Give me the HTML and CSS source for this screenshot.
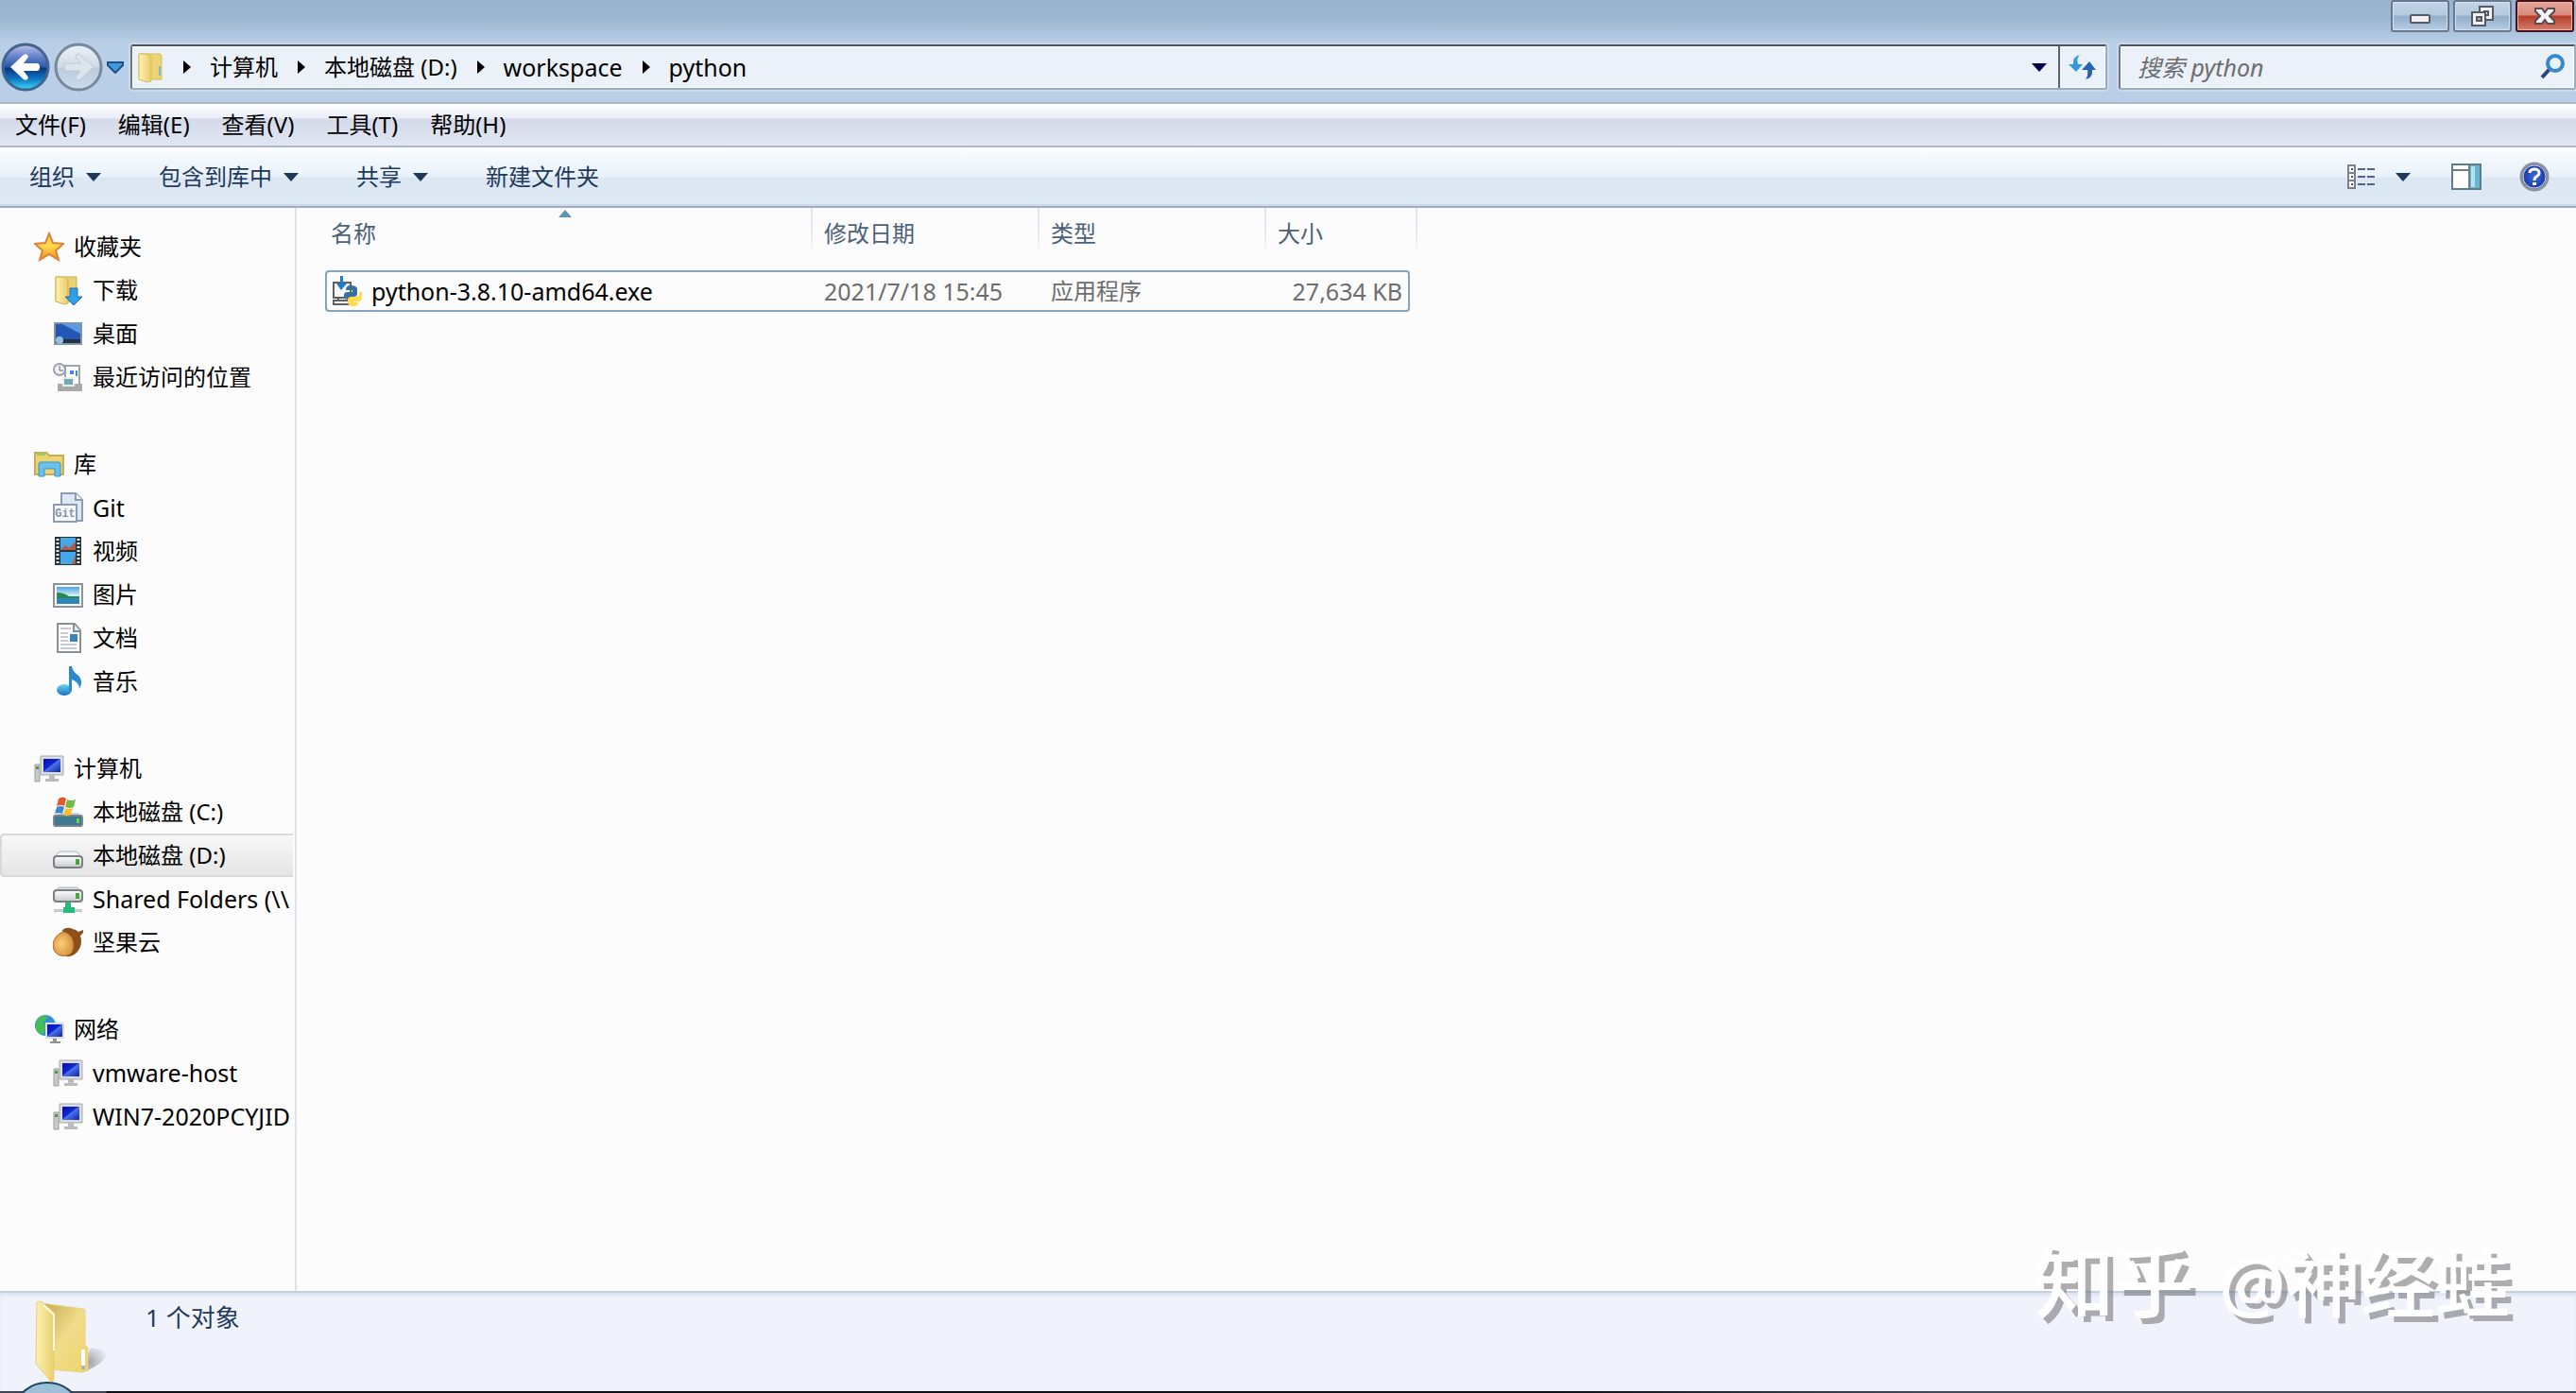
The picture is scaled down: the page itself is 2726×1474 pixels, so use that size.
FILE: index.html
```html
<!DOCTYPE html>
<html lang="zh-CN">
<head>
    <meta charset="UTF-8">
    <meta name="viewport" content="width=device-width, initial-scale=1.0">
    <title>python</title>
    <link rel="stylesheet" href="styles.css">
</head>
<body>
    <!-- shared icons -->
    <svg class="defs" width="0" height="0" aria-hidden="true">
        <defs>
            <linearGradient id="gBack" x1="0" y1="0" x2="0" y2="1">
                <stop offset="0" stop-color="#c3c3ea"/><stop offset=".25" stop-color="#6a86cc"/><stop offset=".5" stop-color="#2a58ab"/>
                <stop offset=".52" stop-color="#08357e"/><stop offset=".75" stop-color="#0d72c4"/><stop offset="1" stop-color="#3be0fa"/>
            </linearGradient>
            <linearGradient id="gFwd" x1="0" y1="0" x2="0" y2="1">
                <stop offset="0" stop-color="#edf2f8"/><stop offset=".5" stop-color="#cfdae6"/><stop offset=".52" stop-color="#bccbdc"/><stop offset="1" stop-color="#cbdcee"/>
            </linearGradient>
            <linearGradient id="gFolder" x1="0" y1="0" x2="1" y2="0">
                <stop offset="0" stop-color="#fdf3b4"/><stop offset="1" stop-color="#e9cd6c"/>
            </linearGradient>
            <linearGradient id="gFolderIn" x1="0" y1="0" x2="1" y2="1">
                <stop offset="0" stop-color="#c5a850"/><stop offset=".5" stop-color="#f0dc8b"/><stop offset="1" stop-color="#efd369"/>
            </linearGradient>
            <linearGradient id="gBlue" x1="0" y1="0" x2="0" y2="1">
                <stop offset="0" stop-color="#73d0f2"/><stop offset="1" stop-color="#1672bf"/>
            </linearGradient>
            <linearGradient id="gScreen" x1="0" y1="0" x2="1" y2="1">
                <stop offset="0" stop-color="#0510b0"/><stop offset=".45" stop-color="#1126cf"/><stop offset=".5" stop-color="#4a74ea"/><stop offset="1" stop-color="#1223a4"/>
            </linearGradient>
            <linearGradient id="gStar" x1="0" y1="0" x2="0" y2="1">
                <stop offset="0" stop-color="#ffcf55"/><stop offset=".5" stop-color="#ffd94d"/><stop offset="1" stop-color="#f28a22"/>
            </linearGradient>
            <linearGradient id="gDrive" x1="0" y1="0" x2="0" y2="1">
                <stop offset="0" stop-color="#fff"/><stop offset="1" stop-color="#c6c9cd"/>
            </linearGradient>
            <linearGradient id="gPhoto" x1="0" y1="0" x2="0" y2="1">
                <stop offset="0" stop-color="#4aa2ec"/><stop offset=".5" stop-color="#d3f0f0"/><stop offset="1" stop-color="#52b8d8"/>
            </linearGradient>
            <radialGradient id="gHelp"><stop offset="0" stop-color="#3d6ce6"/><stop offset="1" stop-color="#12309c"/></radialGradient>
            <radialGradient id="gNut" cx=".4" cy=".5"><stop offset="0" stop-color="#ffce79"/><stop offset="1" stop-color="#d99a44"/></radialGradient>
            <radialGradient id="gShadow" cx=".2" cy=".6" r=".8"><stop offset="0" stop-color="#9a9ca6"/><stop offset="1" stop-color="#f0f3fb"/></radialGradient>

            <symbol id="pc" viewBox="0 0 32 32">
                <path d="M1 12h5v18H1z" fill="#c6cac9" stroke="#9a9e9e"/><path d="M2 14h3v3H2z" fill="#4f9c46"/>
                <path d="M7 3h24v20H7z" fill="#dcdcde" stroke="#a5a7aa"/><path d="M10 6h18v14H10z" fill="url(#gScreen)"/>
                <path d="M16 23h6v4h4v3H12v-3h4z" fill="#b9bbbd"/>
            </symbol>
            <symbol id="drive" viewBox="0 0 32 32">
                <path d="M5 14q1-2 3-2h16q2 0 3 2l3 5H2z" fill="#f6f6f7" stroke="#b0b2b5"/>
                <rect x="1" y="17" width="30" height="12" rx="3" fill="url(#gDrive)" stroke="#7b7e82" stroke-width="2"/>
                <path d="M24 20h4v6h-4z" fill="#43a838"/>
            </symbol>
        </defs>
    </svg>

    <header class="titlebar">
        <div class="window-buttons">
            <button aria-label="最小化"><svg width="24" height="24" viewBox="0 0 24 24"><rect x="2" y="11" width="20" height="8" rx="1" fill="#f2f2f2" stroke="#555b66" stroke-width="2"/></svg></button>
            <button aria-label="还原"><svg width="26" height="24" viewBox="0 0 26 24" fill="#f2f2f2" stroke="#555b66" stroke-width="2"><path d="M10 2h14v14H10z"/><path d="M15 7h4v4h-4z"/><path d="M2 8h14v14H2z"/><path d="M7 13h5v4H7z" fill="#9db7d2"/></svg></button>
            <button class="close" aria-label="关闭"><svg width="24" height="22" viewBox="0 0 24 22"><path d="M2 3h7l3 4 3-4h7v3l-5 5 5 5v3h-7l-3-4-3 4H2v-3l5-5-5-5z" fill="#f4f4f4" stroke="#5a4b55" stroke-width="2"/></svg></button>
        </div>
        <div class="nav">
            <div class="history">
                <button aria-label="后退"><svg width="54" height="54" viewBox="0 0 54 54"><circle cx="27" cy="27" r="24" fill="url(#gBack)" stroke="#45658f" stroke-width="3"/><path d="M11 27 25 14q4-2 5 2l-5 7h14q3 0 3 4t-3 4H25l5 7q-1 4-5 2z" fill="#fff"/></svg></button>
                <button aria-label="前进"><svg width="54" height="54" viewBox="0 0 54 54"><circle cx="27" cy="27" r="24" fill="url(#gFwd)" stroke="#78899c" stroke-width="3"/><path d="M43 27 29 14q-4-2-5 2l5 7H15q-3 0-3 4t3 4h14l-5 7q1 4 5 2z" fill="#dce4ec" stroke="#bdcad8"/></svg></button>
                <button class="recent" aria-label="最近的位置"><svg width="20" height="14" viewBox="0 0 20 14"><path d="M2 2h16v3l-8 8-8-8z" fill="#3c9cdc" stroke="#1f4f86" stroke-width="2"/></svg></button>
            </div>
            <div class="address">
                <svg class="folder" width="28" height="34" viewBox="0 0 28 34"><path d="M2 3h22q2 0 2 3v24H2z" fill="#ecd374" stroke="#d6bb57"/><path d="M2 3h8l5 3v26l-4 1-9-3z" fill="url(#gFolder)" stroke="#d6bb57"/><path d="M24 16v10" stroke="#7fb7d8" stroke-width="2"/></svg>
                <ul class="crumbs">
                    <li><a href="#">计算机</a></li>
                    <li><a href="#">本地磁盘 (D:)</a></li>
                    <li class="latin"><a href="#">workspace</a></li>
                    <li class="latin"><a href="#">python</a></li>
                </ul>
                <button class="drop" aria-label="以前的位置"><i class="tri"></i></button>
                <button class="refresh" aria-label="刷新"><svg width="30" height="28" viewBox="0 0 30 28"><path d="M12 1Q4 3 5 11H0l8 8 7-8h-5Q8 5 12 1z" fill="#3698dc"/><path d="M18 27q8-2 7-10h4l-7-9-8 9h6q1 6-2 10z" fill="#2a62b4"/></svg></button>
            </div>
            <form class="search">
                <input type="search" aria-label="搜索 python" placeholder="搜索 python">
                <button type="button" aria-label="搜索"><svg width="26" height="28" viewBox="0 0 26 28" fill="none"><path d="m2 25 9-10" stroke="#2c4484" stroke-width="4"/><circle cx="16" cy="10" r="8" stroke="#3888ce" stroke-width="4"/></svg></button>
            </form>
        </div>
    </header>

    <nav class="menubar">
        <button>文件(F)</button>
        <button>编辑(E)</button>
        <button>查看(V)</button>
        <button>工具(T)</button>
        <button>帮助(H)</button>
    </nav>

    <div class="toolbar">
        <button>组织<i class="tri"></i></button>
        <button>包含到库中<i class="tri"></i></button>
        <button>共享<i class="tri"></i></button>
        <button>新建文件夹</button>
        <div class="view-tools">
            <button class="views" aria-label="更改视图"><svg width="32" height="28" viewBox="0 0 32 28"><path d="M2 2h7v24H2zM2 10h7M2 18h7" fill="#fff" stroke="#77808c" stroke-width="2"/><path d="M5 5h2v2H5zM5 13h2v2H5zM5 21h2v2H5z" fill="#456"/><path d="M12 6h8m2 0h8M12 14h8m2 0h8M12 22h8m2 0h8" stroke="#4f6580" stroke-width="2"/></svg><i class="tri"></i></button>
            <button aria-label="预览窗格"><svg width="32" height="28" viewBox="0 0 32 28"><path d="M1 1h30v26H1z" fill="#fff" stroke="#5d7c8c" stroke-width="2"/><path d="M20 2h10v24H20z" fill="#69b5cf"/><path d="M21 3h4v22h-4z" fill="#b4e3ef"/><path d="M2 7h17M19 2v24" stroke="#66808f" stroke-width="2"/></svg></button>
            <button aria-label="帮助"><svg width="32" height="32" viewBox="0 0 32 32"><circle cx="16" cy="16" r="14" fill="url(#gHelp)" stroke="#8d939e" stroke-width="3"/><circle cx="16" cy="16" r="12" fill="none" stroke="#d4daec"/><path d="M11 12q0-4 5-4t5 4q0 2-3 4-2 1-2 4" fill="none" stroke="#fff" stroke-width="3"/><path d="M14 22h4v3h-4z" fill="#fff"/></svg></button>
        </div>
    </div>

    <main>
        <aside class="sidebar">
            <ul>
                <li class="root"><svg viewBox="0 0 32 32"><path d="m16 2 4 10 11 1-8 7 3 10-10-6-10 6 3-10-8-7 11-1z" fill="url(#gStar)" stroke="#dd8136" stroke-width="2"/></svg>收藏夹</li>
                <li><svg viewBox="0 0 32 32"><path d="M3 2h22v26H3z" fill="#ecd272" stroke="#cfae50"/><path d="M3 2h9l4 4v24l-4 1-9-3z" fill="url(#gFolder)" stroke="#cfae50"/><path d="M18 14h8v9h5l-9 9-9-9h5z" fill="#2fa0e6" stroke="#226fae"/></svg>下载</li>
                <li><svg viewBox="0 0 32 32"><path d="M1 4h30v24H1z" fill="#8095ac"/><path d="M3 6h26v16H3z" fill="#2456b4"/><path d="M10 6h19v10z" fill="#5b98e6"/><path d="M3 22h26v4H3z" fill="#27313f"/><circle cx="7" cy="23" r="4" fill="#8fc4e0"/></svg>桌面</li>
                <li><svg viewBox="0 0 32 32"><path d="M13 4h15v20H13z" fill="#fff" stroke="#a0a4a8" stroke-width="2"/><path d="M18 9h4v4h-4zM24 9h2v6h-2z" fill="#3a8ad8"/><path d="M5 23h26v8H5z" fill="#a9a9a8"/><path d="M11 17h11v8H11z" fill="#70a9b4" stroke="#e9edef" stroke-width="2"/><circle cx="7" cy="8" r="6" fill="#f0f4f6" stroke="#9aa2a8" stroke-width="2"/><path d="M7 4v5h4" stroke="#667" fill="none"/></svg>最近访问的位置</li>
            </ul>
            <ul>
                <li class="root"><svg viewBox="0 0 32 32"><path d="M1 4h12l3 3h15v20H1z" fill="#ecd375" stroke="#c9ad55" stroke-width="2"/><path d="M3 4h9v3H3z" fill="#9fca62"/><path d="M5 29V16q0-2 2-2h19q2 0 2 2v13h-6v-8H11v8z" fill="#69c1ea" stroke="#3c94c9"/></svg>库</li>
                <li class="latin"><svg viewBox="0 0 32 32"><path d="M9 1h15l7 7v22H9z" fill="#dde7f5" stroke="#8c9cb3" stroke-width="2"/><path d="M24 1v7h7" fill="#fff" stroke="#8c9cb3" stroke-width="2"/><path d="M1 13h24v18H1z" fill="#f8fafd" stroke="#8c9cb3" stroke-width="2"/><text class="git-tag" x="13" y="26" text-anchor="middle">Git</text></svg>Git</li>
                <li><svg viewBox="0 0 32 32"><path d="M2 1h28v30H2z" fill="#28363b"/><path d="M8 2h16v13H8zM8 17h16v13H8z" fill="#46a6e8"/><path d="m8 15 5-5 4 3 7-7v9zM20 30l4-10v10z" fill="#b25b45"/><path d="M5 3v28M27 3v28" stroke="#e2ebea" stroke-width="3" stroke-dasharray="2 2"/></svg>视频</li>
                <li><svg viewBox="0 0 32 32"><path d="M1 5h30v24H1z" fill="#fff" stroke="#8c949e" stroke-width="2"/><path d="M4 8h24v18H4z" fill="url(#gPhoto)"/><path d="M4 14q8 0 13 4h11v2H4z" fill="#2c8753"/><path d="M4 20h24v6H4z" fill="#2c86bd"/></svg>图片</li>
                <li><svg viewBox="0 0 32 32"><path d="M5 1h18l6 7v23H5z" fill="#fdfdfe" stroke="#8a8f96" stroke-width="2"/><path d="M22 1v8h7" fill="#e8ebee" stroke="#8a8f96" stroke-width="2"/><path d="M8 6h11M8 11h8M8 15h8M8 19h8M8 23h17M8 27h17" stroke="#8897ba" stroke-width="1"/><path d="M18 12h8v8h-8z" fill="#3c83bd"/></svg>文档</li>
                <li><svg viewBox="0 0 32 32"><ellipse cx="12" cy="25" rx="8" ry="6" fill="url(#gBlue)"/><path d="M17 0h3q1 6 6 9 7 6 2 15 0-7-8-10v12h-3z" fill="#288bcf"/></svg>音乐</li>
            </ul>
            <ul>
                <li class="root"><svg><use href="#pc"/></svg>计算机</li>
                <li><svg viewBox="0 0 32 32"><path d="M5 17h22l4 5H1z" fill="#cfd5d8"/><rect x="1" y="20" width="30" height="11" rx="2" fill="#3d7a92" stroke="#7b858b" stroke-width="2"/><path d="M25 23h3v5h-3z" fill="#6bd647"/><path d="M6 2q5-3 8 0l-2 8q-3-2-8 0z" fill="#e4572e"/><path d="M15 3q4 2 9 0l-2 8q-4 2-9 0z" fill="#77b944"/><path d="M4 11q4-2 8 0l-2 7q-3-2-8 0z" fill="#3b87d2"/><path d="M13 12q4 2 8 0l-2 7q-4 2-8 0z" fill="#fcc02f"/></svg>本地磁盘 (C:)</li>
                <li class="selected"><svg><use href="#drive"/></svg>本地磁盘 (D:)</li>
                <li class="latin"><svg viewBox="0 0 32 32"><path d="M4 7q1-3 4-3h16q3 0 4 3z" fill="#e2e3e5" stroke="#a9abae"/><rect x="1" y="7" width="30" height="12" rx="3" fill="url(#gDrive)" stroke="#7b7e82" stroke-width="2"/><path d="M24 10h4v6h-4z" fill="#43a838"/><path d="M1 27h30v3H1z" fill="#c3cbcc"/><path d="M13 20h6v5h4v6H11v-6h2z" fill="#24bb7c"/></svg>Shared Folders (\\</li>
                <li><svg viewBox="0 0 32 32"><path d="M10 3q5-4 11-1 4 1 6 3l5-2v3l-3 3q3 9-3 17-5 6-12 5z" fill="#8f4f1d"/><path d="M11 5q5 0 9 6 4 8 0 16-5 5-12 3-8-2-8-12Q2 8 11 5z" fill="url(#gNut)" stroke="#a9682c"/></svg>坚果云</li>
            </ul>
            <ul>
                <li class="root"><svg viewBox="0 0 32 32"><circle cx="12" cy="12" r="11" fill="#3091d6"/><path d="M4 5q6-5 10-3-1 5-5 7 4 2 3 6-1 5-4 7-6-3-7-9z" fill="#47bd55"/><path d="M12 9h20v17H12z" fill="#dcdcde"/><path d="M14 11h16v13H14z" fill="url(#gScreen)"/><path d="M20 26h4v3h4v2H17v-2h3z" fill="#8f9296"/></svg>网络</li>
                <li class="latin"><svg><use href="#pc"/></svg>vmware-host</li>
                <li class="latin"><svg><use href="#pc"/></svg>WIN7-2020PCYJID</li>
            </ul>
        </aside>

        <section class="files">
            <table>
                <thead>
                    <tr>
                        <th class="name sorted">名称</th>
                        <th class="date">修改日期</th>
                        <th class="type">类型</th>
                        <th class="size">大小</th>
                    </tr>
                </thead>
                <tbody>
                    <tr>
                        <td class="name latin"><svg width="32" height="32" viewBox="0 0 32 32"><path d="M2 7h18v16H2zM7 23v3m10-3v3M2 30v-4h18v4z" fill="#f6f8f9" stroke="#5d6165" stroke-width="2"/><path d="M9 0h3v8h4l-6 7-5-7h4z" fill="#1f7fc4"/><path d="M13 23v-3q0-3 4-3h5v-2h-7q0-5 5-5 7 0 7 4v5q0 3-4 3h-5q-3 0-3 3z" fill="#37709f"/><path d="M30 16q2 1 2 6t-4 5h-5v1h5q0 4-5 4-6 0-6-4v-3q0-3 4-3h5q3 0 3-3z" fill="#ffdb4c"/></svg>python-3.8.10-amd64.exe</td>
                        <td class="latin">2021/7/18 15:45</td>
                        <td>应用程序</td>
                        <td class="size latin">27,634 KB</td>
                    </tr>
                </tbody>
            </table>
        </section>
    </main>

    <footer class="details">
        <svg width="84" height="88" viewBox="0 0 84 88"><path d="M50 76 60 50q12 2 20 5-8 14-28 21z" fill="url(#gShadow)"/><path d="M8 3 52 9q2 0 2 3v36l3 2v24l-6 2-33-3z" fill="url(#gFolderIn)" stroke="#ead27d"/><path d="M3 2q3-2 6 0l12 11v70q0 4-4 2L2 67z" fill="url(#gFolder)" stroke="#e6ce79"/><path d="m10 5 11 10v38" fill="none" stroke="#fffbe0" stroke-width="2"/><path d="M52 52v17" stroke="#fff" stroke-width="4"/><path d="M52 69v4" stroke="#8cb4c4" stroke-width="3"/></svg>
        <span>1 个对象</span>
        <svg class="orb" width="56" height="12" viewBox="0 0 56 12"><ellipse cx="28" cy="27" rx="32" ry="26" fill="#9dc0d8" stroke="#1f4560" stroke-width="2"/></svg>
    </footer>
    <div class="taskbar"></div>

    <div class="watermark"><b>知乎</b> @神经蛙</div>
</body>
</html>
```
FILE: styles.css
```css
* {
    box-sizing: border-box;
}
body {
    margin: 0;
    min-height: 100vh;
    display: flex;
    flex-direction: column;
    position: relative;
    overflow: hidden;
    background: #fcfcfc;
    color: #000;
    font-family: "Noto Sans", "Noto Sans CJK SC", sans-serif;
    font-size: 24px;
    line-height: 32px;
}
.latin {
    font-size: 25px;
}
.defs {
    position: absolute;
}
svg {
    display: block;
    flex: none;
}
ul {
    list-style: none;
    margin: 0;
    padding: 0;
}
button {
    display: flex;
    align-items: center;
    padding: 0;
    border: 0;
    background: none;
    font: inherit;
    color: inherit;
    white-space: nowrap;
}
.tri {
    border: 8px solid transparent;
    border-top: 9px solid #1e395b;
    border-bottom: 0;
}

/* title bar */
.titlebar {
    background: linear-gradient(#9ab3ce, #9db7d2 20px, #b9cfe8 46px, #b9cfe8);
    border-bottom: 2px solid #abb8ca;
    padding-bottom: 10px;
}
.window-buttons {
    display: flex;
    justify-content: flex-end;
    gap: 4px;
    padding-right: 2px;
}
.window-buttons button {
    width: 62px;
    height: 34px;
    justify-content: center;
    border: 2px solid #68798f;
    border-radius: 3px;
    background: linear-gradient(#c3d4e6, #b4c9df 14px, #93aeca 15px, #b4cde5);
    box-shadow: inset 0 0 0 1px #d3e0ee;
}
.window-buttons .close {
    border-color: #43121c;
    background: linear-gradient(#e5a79c, #d88a7c 14px, #b63d28 15px, #d57d6b);
    box-shadow: inset 0 0 0 1px #e9b3a8;
}
.nav {
    display: flex;
    align-items: center;
    margin-top: 10px;
    height: 54px;
}
.history {
    display: flex;
    align-items: center;
    gap: 2px;
    width: 138px;
}
.address, .search {
    display: flex;
    align-items: center;
    height: 48px;
    background: #ebf1f9;
    border: 2px solid #9aabbd;
    border-top-color: #4d555f;
    border-left-color: #6c7885;
    border-radius: 3px;
    box-shadow: inset 0 0 0 1px #fff, 0 0 0 2px #c9d9ea;
}
.address {
    flex: 1;
}
.folder {
    margin-left: 5px;
}
.crumbs {
    display: flex;
    flex: 1;
}
.crumbs li {
    display: flex;
    align-items: center;
}
.crumbs li::before {
    content: "";
    margin: 0 20px 0 21px;
    border: 7px solid transparent;
    border-left: 8px solid #000;
    border-right: 0;
}
.crumbs a {
    color: #000;
    text-decoration: none;
}
.drop .tri {
    margin-right: 12px;
    border-top-color: #00004a;
}
.refresh {
    width: 50px;
    height: 44px;
    justify-content: center;
    border-left: 2px solid #5c6671;
}
.search {
    flex: 0 0 484px;
    margin-left: 12px;
    padding: 0 10px 0 18px;
}
.search input {
    flex: 1;
    min-width: 0;
    padding: 0;
    border: 0;
    background: none;
    font: inherit;
    font-size: 25px;
    font-style: italic;
}
.search input::placeholder {
    color: #6d6d6d;
}

/* menu and toolbar */
.menubar {
    display: flex;
    gap: 34px;
    height: 46px;
    padding-left: 16px;
    background: linear-gradient(#fff, #e9edf6 15px, #d5daea 16px, #e1e6f4);
    border-bottom: 2px solid #b2b6c6;
}
.toolbar {
    display: flex;
    gap: 61px;
    height: 64px;
    padding: 0 28px 0 31px;
    color: #1e395b;
    background: linear-gradient(#fbfdff, #e8f1fa 31px, #dce7f3 32px, #dde9f5);
    border-bottom: 2px solid #a0aec3;
    box-shadow: inset 0 -2px #cdd9e8;
}
.toolbar .tri {
    margin-left: 12px;
}
.view-tools {
    display: flex;
    gap: 40px;
    margin-left: auto;
}
.views {
    margin-right: 3px;
}
.views .tri {
    margin-left: 20px;
}

/* body */
main {
    display: flex;
    flex: 1;
}
.sidebar {
    width: 314px;
    padding: 18px 2px 0 0;
    border-right: 2px solid #d9e4f0;
}
.sidebar ul {
    margin-bottom: 46px;
}
.sidebar li {
    display: flex;
    align-items: center;
    gap: 10px;
    height: 46px;
    padding-left: 56px;
    overflow: hidden;
    white-space: nowrap;
}
.sidebar .root {
    padding-left: 36px;
}
.sidebar svg {
    width: 32px;
    height: 32px;
}
.sidebar .selected {
    padding-left: 54px;
    border: 2px solid #d9d9d9;
    border-right: 0;
    border-radius: 4px 0 0 4px;
    background: linear-gradient(#f8f8f8, #e5e5e5);
}
.git-tag {
    font: bold 12px "Liberation Mono", monospace;
    fill: #8292aa;
}
.files {
    flex: 1;
    padding-left: 30px;
}
table {
    table-layout: fixed;
    width: 1148px;
    border-spacing: 0;
}
th, td {
    padding: 0 0 0 12px;
    text-align: left;
    font-weight: normal;
    white-space: nowrap;
}
th {
    position: relative;
    height: 66px;
    padding-bottom: 12px;
    color: #4c607a;
}
th::after {
    content: "";
    position: absolute;
    top: 0;
    right: 0;
    width: 2px;
    height: 50px;
    background: linear-gradient(#dbe6f2, #e3ebf3 60%, #fcfcfc);
}
th.name {
    width: 516px;
    padding-left: 6px;
}
th.date, th.type {
    width: 240px;
}
th.size::after {
    right: -8px;
}
.sorted::before {
    content: "";
    position: absolute;
    top: 2px;
    left: 247px;
    border: 7px solid transparent;
    border-bottom: 8px solid #5f93b4;
    border-top: 0;
}
td {
    height: 44px;
    color: #6d6d6d;
    border: 2px solid #86a3bb;
    border-width: 2px 0;
}
td.name {
    display: flex;
    align-items: center;
    gap: 10px;
    padding-left: 5px;
    color: #000;
    border-left-width: 2px;
    border-radius: 4px 0 0 4px;
}
td.size {
    padding-right: 6px;
    text-align: right;
    border-right-width: 2px;
    border-radius: 0 4px 4px 0;
}

/* details pane */
.details {
    position: relative;
    display: flex;
    gap: 34px;
    height: 106px;
    padding: 8px 36px 0;
    color: #1e395b;
    background: #f0f3fb;
    border-top: 2px solid #c2d0e0;
    box-shadow: inset 0 3px 3px #dbe5f1;
}
.details span {
    padding-top: 2px;
    font-size: 26px;
}
.orb {
    position: absolute;
    left: 22px;
    bottom: -2px;
}
.taskbar {
    height: 2px;
    background: linear-gradient(90deg, #3d4652 112px, #0d0f14 113px, #0d0f14 60%, #444a58 75%);
}
.watermark {
    position: absolute;
    right: 70px;
    bottom: 58px;
    color: #fff;
    font-size: 79px;
    font-weight: 500;
    line-height: 116px;
    text-shadow: 6px 6px 0 rgba(110, 110, 115, .55);
}
.watermark b {
    margin-right: 6px;
    font-size: 84px;
    font-weight: 500;
}
```
